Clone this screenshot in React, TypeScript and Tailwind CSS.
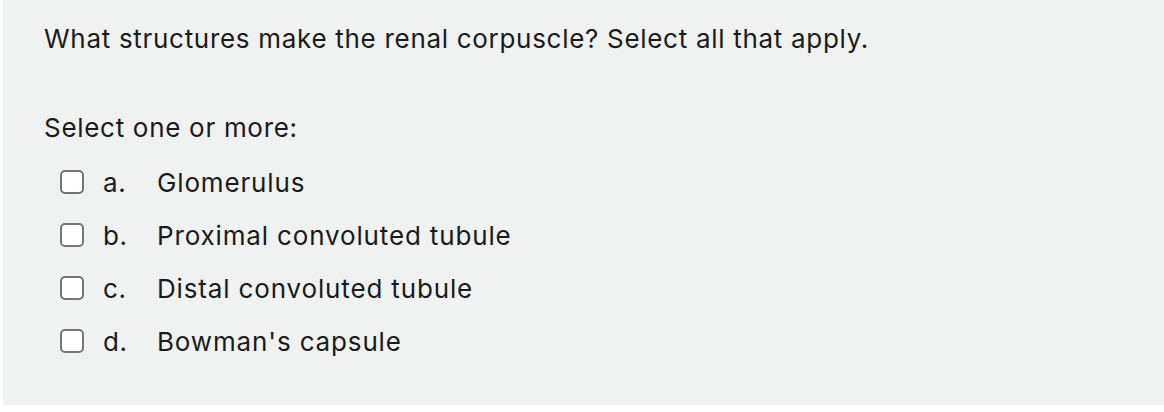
import React from "react";

const options = [
  { l: "a.", t: "Glomerulus" },
  { l: "b.", t: "Proximal convoluted tubule" },
  { l: "c.", t: "Distal convoluted tubule" },
  { l: "d.", t: "Bowman's capsule" },
];

export default function App() {
  return (
    <div className="w-[1164px] h-[412px] bg-white pl-[3px]" style={{ fontFamily: "Inter, 'Open Sans', sans-serif" }}>
      <div className="h-[405px] bg-[#f0f1f1] text-[#1b1b1b] pl-[41px] pt-[23px] tracking-[0.7px]">
        <p className="text-[26px] leading-[32px]">What structures make the renal corpuscle? Select all that apply.</p>
        <p className="text-[26px] leading-[32px] mt-[57px]">Select one or more:</p>
        <div className="mt-[26px] flex flex-col gap-[29px] pl-[16px]">
          {options.map((o) => (
            <div key={o.l} className="flex items-center h-[24px]">
              <div className="w-[24px] h-[24px] rounded-[5px] border-2 border-[#767676] bg-white" />
              <span className="text-[26px] ml-[19px] w-[54px]">{o.l}</span>
              <span className="text-[26px] tracking-[0.85px]">{o.t}</span>
            </div>
          ))}
        </div>
      </div>
    </div>
  );
}
